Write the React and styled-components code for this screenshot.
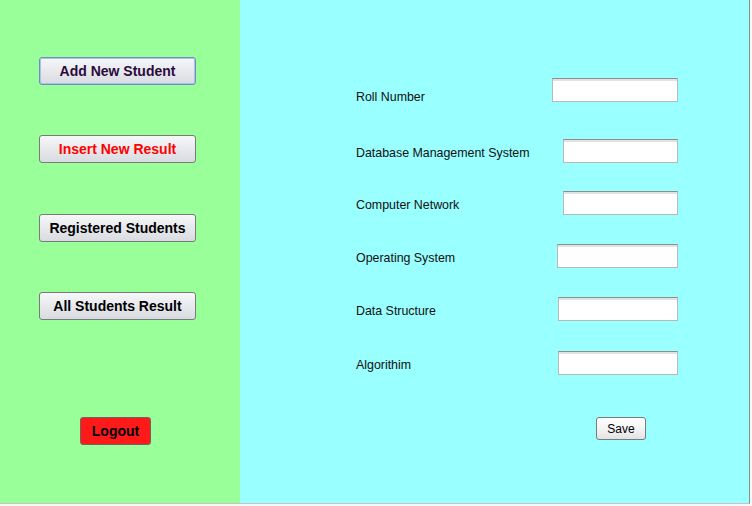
import React from 'react';
import styled, { createGlobalStyle } from 'styled-components';

const GlobalStyle = createGlobalStyle`
  body {
    margin: 0;
    background: #f7f7f7;
    font-family: "Liberation Sans", Arial, sans-serif;
  }
`;

const Frame = styled.div`
  width: 752px;
  height: 506px;
  overflow: hidden;
`;

const Window = styled.div`
  display: flex;
  width: 749px;
  height: 503px;
  border-right: 1px solid #8c8c8c;
  border-bottom: 1px solid #c4c4c4;
`;

const Sidebar = styled.div`
  width: 240px;
  background: #99ff99;
  display: flex;
  flex-direction: column;
  align-items: flex-start;
  padding: 57px 0 0 39px;
  box-sizing: border-box;
`;

const NavButton = styled.button`
  width: 157px;
  height: 28px;
  margin-bottom: ${(p) => p.$gap || 50}px;
  border: 1px solid ${(p) => (p.$focused ? '#6f8fc4' : '#7a7a7a')};
  box-shadow: ${(p) => (p.$focused ? 'inset 0 0 0 1px #a9c2e6' : 'none')};
  border-radius: 3px;
  background: linear-gradient(#f6f7f9, #e4e6ea 60%, #d8dbe1);
  color: ${(p) => p.$color || '#000'};
  font-family: "Liberation Sans", Arial, sans-serif;
  font-weight: bold;
  font-size: 14px;
  padding: 0;
  cursor: pointer;
`;

const LogoutButton = styled.button`
  margin-left: 41px;
  width: 71px;
  height: 28px;
  border: 1px solid #7a6060;
  border-radius: 3px;
  background: #ff1a1a;
  color: #000;
  font-family: "Liberation Sans", Arial, sans-serif;
  font-weight: bold;
  font-size: 14px;
  padding: 0;
  cursor: pointer;
`;

const Content = styled.div`
  flex: 1;
  background: #99ffff;
  padding: 78px 0 0 116px;
  box-sizing: border-box;
`;

const Form = styled.div`
  width: 322px;
  display: flex;
  flex-direction: column;
`;

const Row = styled.div`
  display: flex;
  justify-content: space-between;
  align-items: ${(p) => p.$align || 'center'};
  margin-top: ${(p) => p.$gap || 0}px;
  height: 24px;
`;

const Label = styled.label`
  font-size: 12.4px;
  line-height: 14px;
  color: #111;
  padding-top: 3px;
  margin-bottom: ${(p) => (p.$bottom ? -2 : 0)}px;
`;

const Field = styled.input`
  display: block;
  width: ${(p) => p.$w}px;
  height: 24px;
  box-sizing: border-box;
  background: #fff;
  border: 1px solid #b8b8b8;
  border-top-color: #8e8e8e;
  box-shadow: inset 0 2px 0 #e2e2e2;
  outline: none;
  margin: 0;
`;

const Actions = styled.div`
  margin: 42px 0 0 240px;
`;

const SaveButton = styled.button`
  display: block;
  width: 50px;
  height: 23px;
  border: 1px solid #7a7a7a;
  border-radius: 3px;
  background: linear-gradient(#ffffff, #f1f1f1 60%, #e2e2e2);
  color: #000;
  font-family: "Liberation Sans", Arial, sans-serif;
  font-size: 12px;
  padding: 0;
  cursor: pointer;
`;

const subjects = [
  { label: 'Roll Number', width: 126, gap: 0, bottom: true },
  { label: 'Database Management System', width: 115, gap: 37 },
  { label: 'Computer Network', width: 115, gap: 28 },
  { label: 'Operating System', width: 121, gap: 29 },
  { label: 'Data Structure', width: 120, gap: 29 },
  { label: 'Algorithim', width: 120, gap: 30 },
];

const App = () => {
  return (
    <Frame>
      <GlobalStyle />
      <Window>
        <Sidebar>
          <NavButton $focused $color="#2b0a3d">Add New Student</NavButton>
          <NavButton $color="#ff0000" $gap={51}>Insert New Result</NavButton>
          <NavButton $gap={50}>Registered Students</NavButton>
          <NavButton $gap={97}>All Students Result</NavButton>
          <LogoutButton>Logout</LogoutButton>
        </Sidebar>
        <Content>
          <Form>
            {subjects.map((s) => (
              <Row key={s.label} $gap={s.gap} $align={s.bottom ? 'flex-end' : 'center'}>
                <Label $bottom={s.bottom}>{s.label}</Label>
                <Field type="text" $w={s.width} />
              </Row>
            ))}
            <Actions>
              <SaveButton>Save</SaveButton>
            </Actions>
          </Form>
        </Content>
      </Window>
    </Frame>
  );
};

export default App;
